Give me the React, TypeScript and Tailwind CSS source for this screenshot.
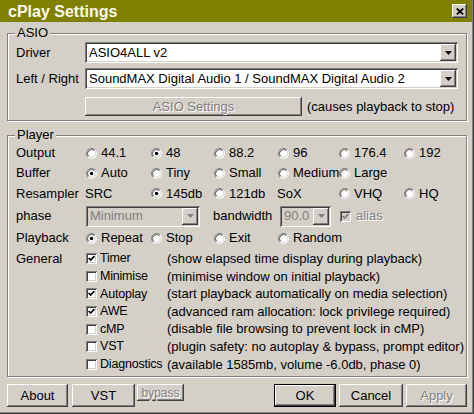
import type { ReactNode } from "react";

const raised =
  "shadow-[inset_-1px_-1px_#404040,inset_1px_1px_#ffffff,inset_-2px_-2px_#808080,inset_2px_2px_#d4d0c8]";
const sunken =
  "shadow-[inset_1px_1px_#808080,inset_-1px_-1px_#ffffff,inset_2px_2px_#404040,inset_-2px_-2px_#d4d0c8]";
const dim = "text-[#808080] [text-shadow:1px_1px_0_#ffffff]";

function Radio({ on }: { on?: boolean }) {
  return (
    <svg width="11" height="11" viewBox="0 0 12 12" className="shrink-0">
      <circle cx="6" cy="6" r="5" fill="#fff" />
      <path d="M2.11 9.89 A5.5 5.5 0 0 1 9.89 2.11" fill="none" stroke="#808080" />
      <path d="M9.89 2.11 A5.5 5.5 0 0 1 2.11 9.89" fill="none" stroke="#ffffff" />
      <path d="M2.82 9.18 A4.5 4.5 0 0 1 9.18 2.82" fill="none" stroke="#404040" />
      <path d="M9.18 2.82 A4.5 4.5 0 0 1 2.82 9.18" fill="none" stroke="#d4d0c8" />
      {on && <circle cx="6" cy="6" r="1.9" fill="#000" />}
    </svg>
  );
}

function Check({ on, disabled }: { on?: boolean; disabled?: boolean }) {
  return (
    <div
      className={`flex h-[11px] w-[11px] shrink-0 items-center justify-center ${sunken} ${
        disabled ? "bg-[#d4d0c8]" : "bg-white"
      }`}
    >
      {on && (
        <svg width="7" height="7" viewBox="0 0 7 7">
          <path
            d="M0.6 3 L2.6 5 L6.4 1.2"
            fill="none"
            stroke={disabled ? "#808080" : "#000"}
            strokeWidth="1.7"
          />
        </svg>
      )}
    </div>
  );
}

function Arrow({ disabled }: { disabled?: boolean }) {
  return (
    <div className={`flex h-full w-[16px] shrink-0 items-center justify-center bg-[#d4d0c8] ${raised}`}>
      <svg width="7" height="4" viewBox="0 0 7 4">
        <polygon points="0,0 7,0 3.5,4" fill={disabled ? "#808080" : "#000"} />
      </svg>
    </div>
  );
}

function Combo({ text, className, disabled }: { text: string; className: string; disabled?: boolean }) {
  return (
    <div
      className={`flex items-center p-[2px] ${sunken} ${disabled ? "bg-[#d4d0c8]" : "bg-white"} ${className}`}
    >
      <span className={`flex-1 truncate pl-[2px] ${disabled ? "text-[#808080]" : ""}`}>{text}</span>
      <Arrow disabled={disabled} />
    </div>
  );
}

function Opt({ label, on }: { label: string; on?: boolean }) {
  return (
    <div className="flex items-center gap-[4px] pl-[1px] whitespace-nowrap">
      <Radio on={on} />
      <span>{label}</span>
    </div>
  );
}

function Group({ label, className, children }: { label: string; className: string; children: ReactNode }) {
  return (
    <div
      className={`relative w-[460px] border border-[#808080] shadow-[1px_1px_0_#ffffff,inset_1px_1px_0_#ffffff] ${className}`}
    >
      <span className="absolute -top-[9px] left-[7px] bg-[#d4d0c8] px-[2px] leading-[16px]">{label}</span>
      {children}
    </div>
  );
}

function Btn({ children, className, disabled }: { children: ReactNode; className: string; disabled?: boolean }) {
  return (
    <div className={`flex items-center justify-center bg-[#d4d0c8] ${raised} ${disabled ? dim : ""} ${className}`}>
      {children}
    </div>
  );
}

const general = [
  { name: "Timer", on: true, desc: "(show elapsed time display during playback)" },
  { name: "Minimise", on: false, desc: "(minimise window on initial playback)" },
  { name: "Autoplay", on: true, desc: "(start playback automatically on media selection)" },
  { name: "AWE", on: true, desc: "(advanced ram allocation: lock privilege required)" },
  { name: "cMP", on: false, desc: "(disable file browsing to prevent lock in cMP)" },
  { name: "VST", on: false, desc: "(plugin safety: no autoplay & bypass, prompt editor)" },
  { name: "Diagnostics", on: false, desc: "(available 1585mb, volume -6.0db, phase 0)" },
];

const cols = "grid grid-cols-[69px_65px_63px_64px_61px_65px_1fr] items-center";

export default function App() {
  return (
    <div className="h-[414px] w-[474px] overflow-hidden bg-[#d4d0c8] pb-[2px] pr-[2px] font-['Liberation_Sans',Arial,sans-serif] text-[13px] text-black shadow-[inset_-1px_-1px_#404040,inset_-2px_-2px_#808080]">
      <div className="flex h-[22px] items-center justify-between bg-[#808000] pl-[8px] pr-[5px]">
        <span className="pt-[2px] text-[16px] font-bold text-[#fbfbee]">cPlay Settings</span>
        <div className={`flex h-[14px] w-[15px] items-center justify-center bg-[#d4d0c8] ${raised}`}>
          <svg width="8" height="7" viewBox="0 0 8 7">
            <path d="M0.8 0.5 L7.2 6.5 M7.2 0.5 L0.8 6.5" stroke="#000" strokeWidth="1.8" />
          </svg>
        </div>
      </div>

      <div className="pl-[7px]">
        <Group label="ASIO" className="mt-[11px] px-[8px] pb-[4px] pt-[8px]">
          <div className="flex h-[21px] items-center">
            <span className="w-[69px] shrink-0">Driver</span>
            <Combo text="ASIO4ALL v2" className="h-[21px] w-[375px]" />
          </div>
          <div className="mt-[5px] flex h-[21px] items-center">
            <span className="w-[69px] shrink-0">Left / Right</span>
            <Combo
              text="SoundMAX Digital Audio 1 / SoundMAX Digital Audio 2"
              className="h-[21px] w-[375px]"
            />
          </div>
          <div className="mt-[8px] flex h-[19px] items-center">
            <div className="w-[69px] shrink-0" />
            <Btn className="h-[19px] w-[217px]" disabled>
              ASIO Settings
            </Btn>
            <span className="ml-[5px]">(causes playback to stop)</span>
          </div>
        </Group>

        <Group label="Player" className="mt-[14px] px-[8px] pb-[3px] pt-[7px]">
          <div className={`${cols} h-[20px]`}>
            <span>Output</span>
            <Opt label="44.1" />
            <Opt label="48" on />
            <Opt label="88.2" />
            <Opt label="96" />
            <Opt label="176.4" />
            <Opt label="192" />
          </div>
          <div className={`${cols} h-[20px]`}>
            <span>Buffer</span>
            <Opt label="Auto" on />
            <Opt label="Tiny" />
            <Opt label="Small" />
            <Opt label="Medium" />
            <Opt label="Large" />
          </div>
          <div className={`${cols} h-[21px]`}>
            <span>Resampler</span>
            <span>SRC</span>
            <Opt label="145db" on />
            <Opt label="121db" />
            <span>SoX</span>
            <Opt label="VHQ" />
            <Opt label="HQ" />
          </div>
          <div className={`${cols} h-[24px]`}>
            <span>phase</span>
            <div className="col-span-2 pl-[1px]">
              <Combo text="Minimum" className="h-[21px] w-[114px]" disabled />
            </div>
            <span>bandwidth</span>
            <div className="pl-[3px]">
              <Combo text="90.0" className="h-[21px] w-[51px]" disabled />
            </div>
            <div className="flex items-center gap-[5px] pl-[2px]">
              <Check on disabled />
              <span className={dim}>alias</span>
            </div>
          </div>
          <div className={`${cols} h-[20px]`}>
            <span>Playback</span>
            <Opt label="Repeat" on />
            <Opt label="Stop" />
            <Opt label="Exit" />
            <Opt label="Random" />
          </div>
          <div className="mt-[2px] flex">
            <span className="w-[69px] shrink-0 leading-[17.6px]">General</span>
            <div className="flex flex-col">
              {general.map((g) => (
                <div key={g.name} className="flex h-[17.6px] items-center">
                  <div className="flex w-[82px] shrink-0 items-center gap-[3px] pl-[1px]">
                    <Check on={g.on} />
                    <span className="text-[12.5px] tracking-[-0.2px]">{g.name}</span>
                  </div>
                  <span className="whitespace-nowrap">{g.desc}</span>
                </div>
              ))}
            </div>
          </div>
        </Group>

        <div className="mt-[7px] flex w-[460px] items-start justify-between">
          <div className="flex items-start">
            <Btn className="h-[23px] w-[61px]">About</Btn>
            <Btn className="ml-[4px] h-[23px] w-[63px]">VST</Btn>
            <Btn className="ml-[2px] h-[17px] w-[47px] text-[12px]" disabled>
              bypass
            </Btn>
          </div>
          <div className="flex items-start">
            <div className="h-[23px] w-[62px] border border-black">
              <Btn className="h-full w-full">OK</Btn>
            </div>
            <Btn className="ml-[3px] h-[23px] w-[64px]">Cancel</Btn>
            <Btn className="ml-[3px] h-[23px] w-[61px]" disabled>
              Apply
            </Btn>
          </div>
        </div>
      </div>
    </div>
  );
}
